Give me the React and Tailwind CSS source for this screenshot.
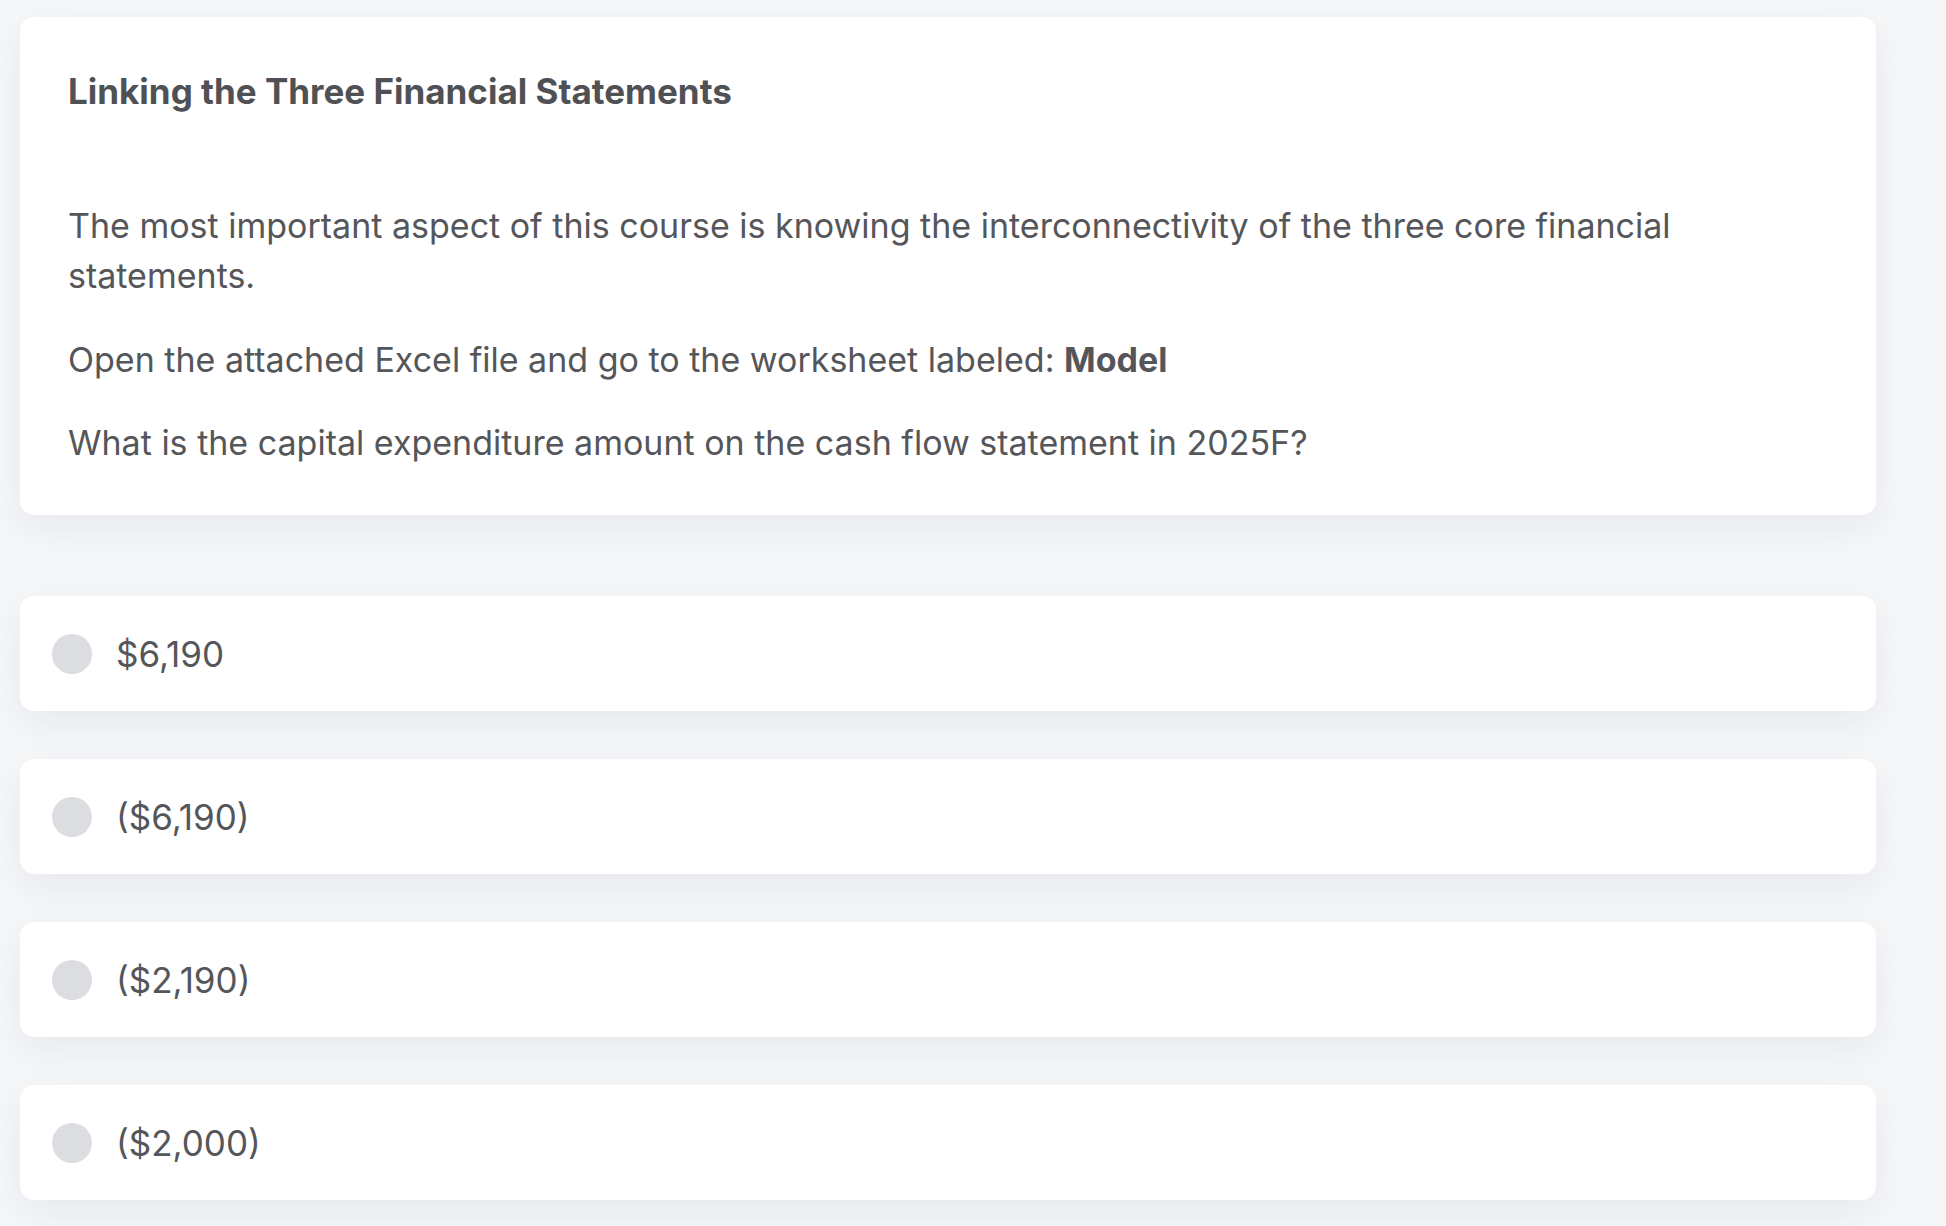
import React from "react";

const options = ["$6,190", "($6,190)", "($2,190)", "($2,000)"];

export default function App() {
  return (
    <div
      className="min-h-[1226px] w-full bg-[#f6f7f9] pl-[20px] pr-[70px] pt-[17px] pb-[27px] text-[#55565a]"
      style={{ fontFamily: "Inter, 'Liberation Sans', sans-serif" }}
    >
      <div className="rounded-[14px] bg-white px-12 pt-[48px] pb-[47px] shadow-[0_12px_40px_rgba(30,35,50,0.07)]">
        <h1 className="text-[35px] font-bold leading-[52px] text-[#505155]">
          Linking the Three Financial Statements
        </h1>
        <div className="mt-[84px] text-[34px] leading-[50px]">
          <p>
            The most important aspect of this course is knowing the interconnectivity of the three core financial
            statements.
          </p>
          <p className="mt-[34px]">
            Open the attached Excel file and go to the worksheet labeled: <strong className="font-bold">Model</strong>
          </p>
          <p className="mt-[33px]">What is the capital expenditure amount on the cash flow statement in 2025F?</p>
        </div>
      </div>

      <div className="mt-[81px] flex flex-col gap-[48px]">
        {options.map((o) => (
          <div
            key={o}
            className="flex h-[115px] items-center rounded-[14px] bg-white pl-[32px] shadow-[0_12px_40px_rgba(30,35,50,0.07)]"
          >
            <span className="h-[40px] w-[40px] shrink-0 rounded-full bg-[#dcdde0]" />
            <span className="ml-[24px] text-[35px] leading-[50px]">{o}</span>
          </div>
        ))}
      </div>
    </div>
  );
}
